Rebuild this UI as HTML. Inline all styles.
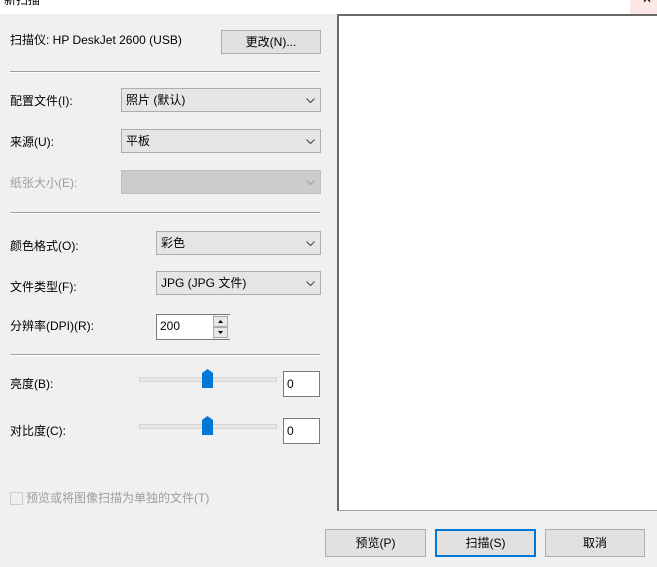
<!DOCTYPE html>
<html><head><meta charset="utf-8"><style>
body{margin:0;width:657px;height:567px;background:#f0f0f0;position:relative;overflow:hidden;font-family:"Liberation Sans","Noto Sans CJK SC",sans-serif;font-size:12px;color:#000}
.a{position:absolute}
.lbl{position:absolute;line-height:16px}
.btn{position:absolute;background:#e1e1e1;border:1px solid #adadad;box-sizing:border-box;text-align:center}
.cb{position:absolute;background:#e5e5e5;border:1px solid #adadad;box-sizing:border-box;padding-left:4px;line-height:22px}
.cb svg{position:absolute;right:5px;top:9px}
.sep{position:absolute;left:10px;width:310px;height:1px;background:#a0a0a0;border-bottom:1px solid #fff}
.box{position:absolute;background:#fff;border:1px solid #7a7a7a;box-sizing:border-box;padding-left:3px}
.track{position:absolute;left:139px;width:136px;height:3px;background:#e7e7e7;border:1px solid #d6d6d6}
</style></head><body>
<div class="a" style="left:0;top:0;width:657px;height:14px;background:#fff"></div>
<div class="a" style="left:630px;top:0;width:27px;height:14px;background:#fde8e8"></div>
<div class="a" style="left:4px;top:-9px;font-size:12px;color:#000">新扫描</div>
<div class="a" style="left:642px;top:-8px;font-size:12px">✕</div>

<div class="lbl" style="left:10px;top:32px">扫描仪: HP DeskJet 2600 (USB)</div>
<div class="btn" style="left:221px;top:30px;width:100px;height:24px;line-height:22px">更改(N)...</div>
<div class="sep" style="top:71px"></div>

<div class="lbl" style="left:10px;top:93px">配置文件(I):</div>
<div class="cb" style="left:121px;top:88px;width:200px;height:24px">照片 (默认)<svg width="9" height="6"><path d="M0.5 0.5L4.5 4.5L8.5 0.5" stroke="#444" fill="none"/></svg></div>
<div class="lbl" style="left:10px;top:134px">来源(U):</div>
<div class="cb" style="left:121px;top:129px;width:200px;height:24px">平板<svg width="9" height="6"><path d="M0.5 0.5L4.5 4.5L8.5 0.5" stroke="#444" fill="none"/></svg></div>
<div class="lbl" style="left:10px;top:175px;color:#9d9d9d">纸张大小(E):</div>
<div class="cb" style="left:121px;top:170px;width:200px;height:24px;background:#cccccc;border-color:#bfbfbf"><svg width="9" height="6"><path d="M0.5 0.5L4.5 4.5L8.5 0.5" stroke="#a0a0a0" fill="none"/></svg></div>
<div class="sep" style="top:212px"></div>

<div class="lbl" style="left:10px;top:238px">颜色格式(O):</div>
<div class="cb" style="left:156px;top:231px;width:165px;height:24px">彩色<svg width="9" height="6"><path d="M0.5 0.5L4.5 4.5L8.5 0.5" stroke="#444" fill="none"/></svg></div>
<div class="lbl" style="left:10px;top:279px">文件类型(F):</div>
<div class="cb" style="left:156px;top:271px;width:165px;height:24px">JPG (JPG 文件)<svg width="9" height="6"><path d="M0.5 0.5L4.5 4.5L8.5 0.5" stroke="#444" fill="none"/></svg></div>
<div class="lbl" style="left:10px;top:318px">分辨率(DPI)(R):</div>
<div class="box" style="left:156px;top:314px;width:74px;height:26px;line-height:22px">200</div>
<div class="a" style="left:213px;top:315px;width:16px;height:24px;background:#f0f0f0;border-left:1px solid #ccc"></div>
<div class="a" style="left:213px;top:316px;width:15px;height:11px;background:#e8e8e8;border:1px solid #adadad;box-sizing:border-box"><svg width="13" height="9" style="position:absolute;left:0;top:0"><path d="M4 6L6.5 3L9 6Z" fill="#000"/></svg></div>
<div class="a" style="left:213px;top:327px;width:15px;height:11px;background:#e8e8e8;border:1px solid #adadad;box-sizing:border-box"><svg width="13" height="9" style="position:absolute;left:0;top:0"><path d="M4 3L6.5 6L9 3Z" fill="#000"/></svg></div>
<div class="sep" style="top:354px"></div>

<div class="lbl" style="left:10px;top:376px">亮度(B):</div>
<div class="track" style="top:377px"></div>
<svg class="a" style="left:202px;top:369px" width="11" height="19"><path d="M0 4L5.5 0L11 4V19H0Z" fill="#0078d7"/></svg>
<div class="box" style="left:283px;top:371px;width:37px;height:26px;line-height:24px">0</div>
<div class="lbl" style="left:10px;top:423px">对比度(C):</div>
<div class="track" style="top:424px"></div>
<svg class="a" style="left:202px;top:416px" width="11" height="19"><path d="M0 4L5.5 0L11 4V19H0Z" fill="#0078d7"/></svg>
<div class="box" style="left:283px;top:418px;width:37px;height:26px;line-height:24px">0</div>

<div class="a" style="left:10px;top:492px;width:13px;height:13px;border:1px solid #ccc;box-sizing:border-box;background:#f0f0f0"></div>
<div class="lbl" style="left:26px;top:490px;color:#9d9d9d">预览或将图像扫描为单独的文件(T)</div>

<div class="a" style="left:337px;top:14px;width:330px;height:497px;background:#fff;border-left:2px solid #696969;border-top:2px solid #696969;border-bottom:1px solid #a0a0a0;box-sizing:border-box"></div>

<div class="btn" style="left:325px;top:529px;width:101px;height:28px;line-height:26px">预览(P)</div>
<div class="btn" style="left:435px;top:529px;width:101px;height:28px;line-height:24px;border:2px solid #0078d7">扫描(S)</div>
<div class="btn" style="left:545px;top:529px;width:100px;height:28px;line-height:26px">取消</div>
</body></html>
